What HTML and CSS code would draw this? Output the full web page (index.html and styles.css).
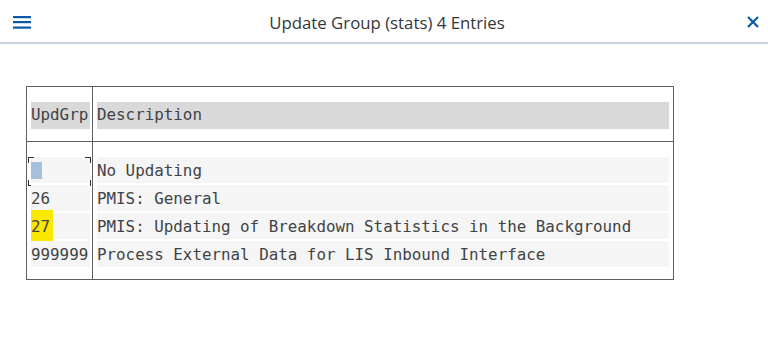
FILE: index.html
```html
<!DOCTYPE html>
<html>
<head>
  <meta name="viewport" content="width=device-width, initial-scale=1.0">
  <title>Update Group (stats) 4 Entries</title>
  <link rel="stylesheet" href="styles.css">
</head>
<body>
  <header class="bar">
    <button class="icon-btn" aria-label="Menu">
      <svg width="18" height="14" viewBox="0 0 18 14">
        <rect x="0" y="1" width="18" height="2.2" fill="#0b5aa6"/>
        <rect x="0" y="6" width="18" height="2.2" fill="#0b5aa6"/>
        <rect x="0" y="11.5" width="18" height="2.2" fill="#0b5aa6"/>
      </svg>
    </button>
    <div class="title">Update Group (stats) 4 Entries</div>
    <button class="icon-btn" aria-label="Close">
      <svg width="12" height="12" viewBox="0 0 12 12">
        <path d="M1 1 L11 11 M11 1 L1 11" stroke="#0b5aa6" stroke-width="2.2" fill="none"/>
      </svg>
    </button>
  </header>

  <div class="grid">
    <div class="cell head key">
      <div class="label">UpdGrp</div>
    </div>
    <div class="cell head">
      <div class="label">Description</div>
    </div>

    <div class="cell body key">
      <div class="row focused">
        <span class="cursor"></span>
        <span class="corner tl"></span><span class="corner tr"></span>
        <span class="corner bl"></span><span class="corner br"></span>
      </div>
      <div class="row">26</div>
      <div class="row"><span class="mark">27</span></div>
      <div class="row">999999</div>
    </div>
    <div class="cell body">
      <div class="row">No Updating</div>
      <div class="row">PMIS: General</div>
      <div class="row">PMIS: Updating of Breakdown Statistics in the Background</div>
      <div class="row">Process External Data for LIS Inbound Interface</div>
    </div>
  </div>
</body>
</html>
```

FILE: styles.css
```css
body {
  margin: 0;
  background-color: #fff;
  color: #32363a;
  font-family: "Open Sans", "Liberation Sans", Arial, sans-serif;
}

.bar {
  display: flex;
  align-items: center;
  justify-content: space-between;
  height: 42px;
  padding: 0 9px 0 13px;
  border-bottom: 2px solid #c9d5e3;
}

.icon-btn {
  display: flex;
  align-items: center;
  background: none;
  border: none;
  padding: 0;
  margin-top: 2px;
}

.title {
  font-size: 16.8px;
  padding-right: 4px;
  margin-top: 2px;
}

.grid {
  display: grid;
  grid-template-columns: 66px 1fr;
  width: 648px;
  box-sizing: border-box;
  margin: 42px 0 0 26px;
  border: 1px solid #5f5f5f;
  font-family: "DejaVu Sans Mono", "Liberation Mono", monospace;
  font-size: 15.85px;
  color: #404346;
}

.cell {
  padding: 15px 4px 12px 4px;
}

.cell.key {
  border-right: 1px solid #5f5f5f;
  padding-right: 2px;
}

.cell.head {
  border-bottom: 1px solid #5f5f5f;
}

.label {
  background-color: #d9d9d9;
  height: 27px;
  line-height: 26px;
}

.body {
  display: flex;
  flex-direction: column;
  gap: 2px;
}

.row {
  position: relative;
  height: 26px;
  line-height: 27px;
  background-color: #f5f5f5;
  white-space: nowrap;
}

.cursor {
  position: absolute;
  left: 0;
  top: 5px;
  width: 11px;
  height: 17px;
  background-color: #a6bfdb;
}

.corner {
  position: absolute;
  width: 5px;
  height: 5px;
  border-color: #333;
  border-style: solid;
  border-width: 0;
}

.corner.tl { left: -3px; top: 0; border-top-width: 1px; border-left-width: 1px; }
.corner.tr { right: -1px; top: 0; border-top-width: 1px; border-right-width: 1px; }
.corner.bl { left: -3px; bottom: -3px; border-bottom-width: 1px; border-left-width: 1px; }
.corner.br { right: -1px; bottom: -3px; border-bottom-width: 1px; border-right-width: 1px; }

.mark {
  position: relative;
  display: inline-block;
  z-index: 0;
}

.mark::before {
  content: "";
  position: absolute;
  left: 0;
  top: -3px;
  width: 22px;
  height: 35px;
  background-color: #fbe800;
  z-index: -1;
}
```
